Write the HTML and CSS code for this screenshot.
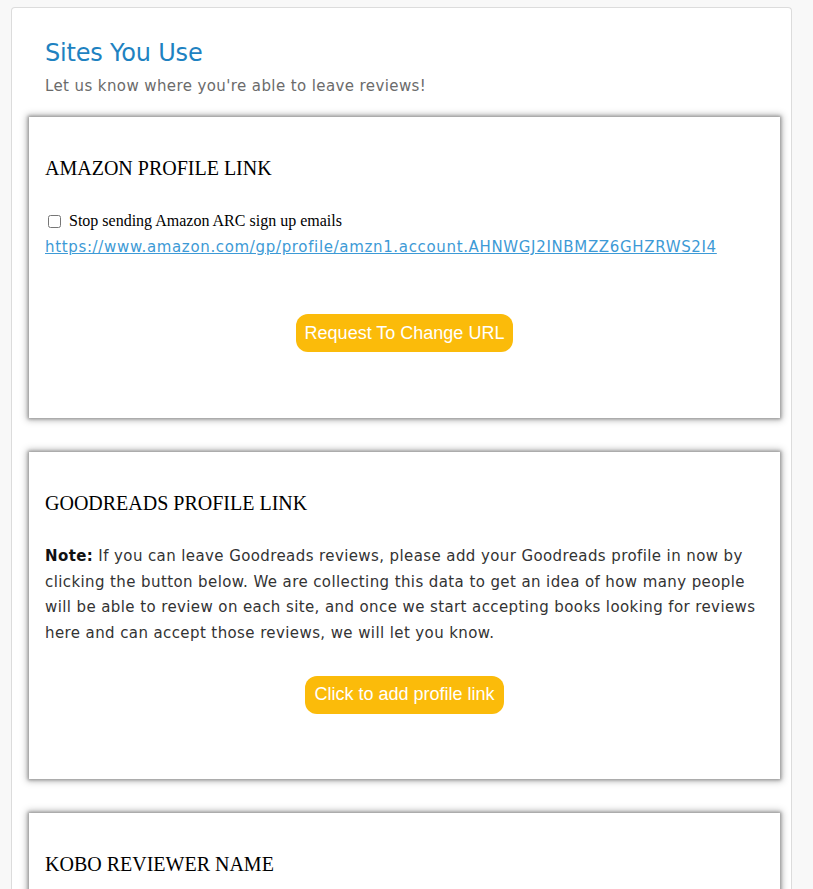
FILE: index.html
```html
<!DOCTYPE html>
<html lang="en">
<head>
<meta charset="utf-8">
<title>Sites You Use</title>
<link rel="stylesheet" href="styles.css">
</head>
<body>
<div class="panel">
  <h1 class="title">Sites You Use</h1>
  <p class="subtitle">Let us know where you're able to leave reviews!</p>

  <section class="card card-amazon">
    <h3 class="card-title">AMAZON PROFILE LINK</h3>
    <label class="check-row"><input type="checkbox" class="check"> Stop sending Amazon ARC sign up emails</label>
    <a class="profile-link" href="#">https://www.amazon.com/gp/profile/amzn1.account.AHNWGJ2INBMZZ6GHZRWS2I4</a>
    <div class="btn-row btn-row-amazon"><button class="btn">Request To Change URL</button></div>
  </section>

  <section class="card card-goodreads">
    <h3 class="card-title">GOODREADS PROFILE LINK</h3>
    <p class="note"><strong>Note:</strong> If you can leave Goodreads reviews, please add your Goodreads profile in now by clicking the button below. We are collecting this data to get an idea of how many people will be able to review on each site, and once we start accepting books looking for reviews here and can accept those reviews, we will let you know.</p>
    <div class="btn-row btn-row-goodreads"><button class="btn">Click to add profile link</button></div>
  </section>

  <section class="card card-kobo">
    <h3 class="card-title">KOBO REVIEWER NAME</h3>
  </section>
</div>
</body>
</html>
```

FILE: styles.css
```css
html, body {
  margin: 0;
  padding: 0;
  background: #f8f8f8;
  overflow: hidden;
}
body {
  padding: 7px 21px 0 11px;
  font-family: "DejaVu Sans", sans-serif;
}
.panel {
  background: #fff;
  border: 1px solid #dcdcdc;
  border-bottom: none;
  border-radius: 4px 4px 0 0;
  padding: 30px 11px 40px 17px;
  height: 1000px;
}
.title {
  margin: 0 0 0 16px;
  font-size: 24px;
  line-height: 30px;
  font-weight: 500;
  color: #1e82c1;
  letter-spacing: -0.2px;
}
.subtitle {
  margin: 7px 0 0 16px;
  font-size: 15px;
  line-height: 22px;
  color: #6b6b6b;
  letter-spacing: 0.4px;
}
.card {
  background: #fff;
  margin-top: 20px;
  padding: 40px 16px 0 16px;
  box-shadow: 0 0 3px 1px #959595, 0 0 7px 2px rgba(0, 0, 0, 0.28);
}
.card + .card {
  margin-top: 34px;
}
.card-amazon { height: 261px; }
.card-goodreads { height: 287px; }
.card-kobo { height: 200px; }
.card-title {
  margin: 0;
  font-family: "Liberation Serif", serif;
  font-weight: normal;
  font-size: 20px;
  line-height: 22px;
  color: #000;
}
.check-row {
  display: flex;
  align-items: center;
  margin-top: 32px;
  height: 20px;
  font-family: "Liberation Serif", serif;
  font-size: 16px;
  color: #000;
}
.check {
  width: 13px;
  height: 13px;
  margin: 0 8px 0 3px;
}
.profile-link {
  display: block;
  margin-top: 6px;
  font-size: 15px;
  line-height: 20px;
  color: #3d9ad6;
  text-decoration: underline;
  letter-spacing: 0.66px;
}
.btn-row {
  display: flex;
  justify-content: center;
}
.btn-row-amazon { margin-top: 57px; }
.btn-row-goodreads { margin-top: 29px; }
.btn {
  background: #fbbb0a;
  color: #fff;
  border: none;
  border-radius: 12px;
  font-family: "Liberation Sans", sans-serif;
  font-size: 18px;
  height: 38px;
  padding: 0 9px;
}
.note {
  margin: 30px -4px 0 0;
  font-size: 15px;
  line-height: 25.7px;
  color: #333;
  letter-spacing: 0.4px;
}
.note strong {
  color: #111;
}
```
